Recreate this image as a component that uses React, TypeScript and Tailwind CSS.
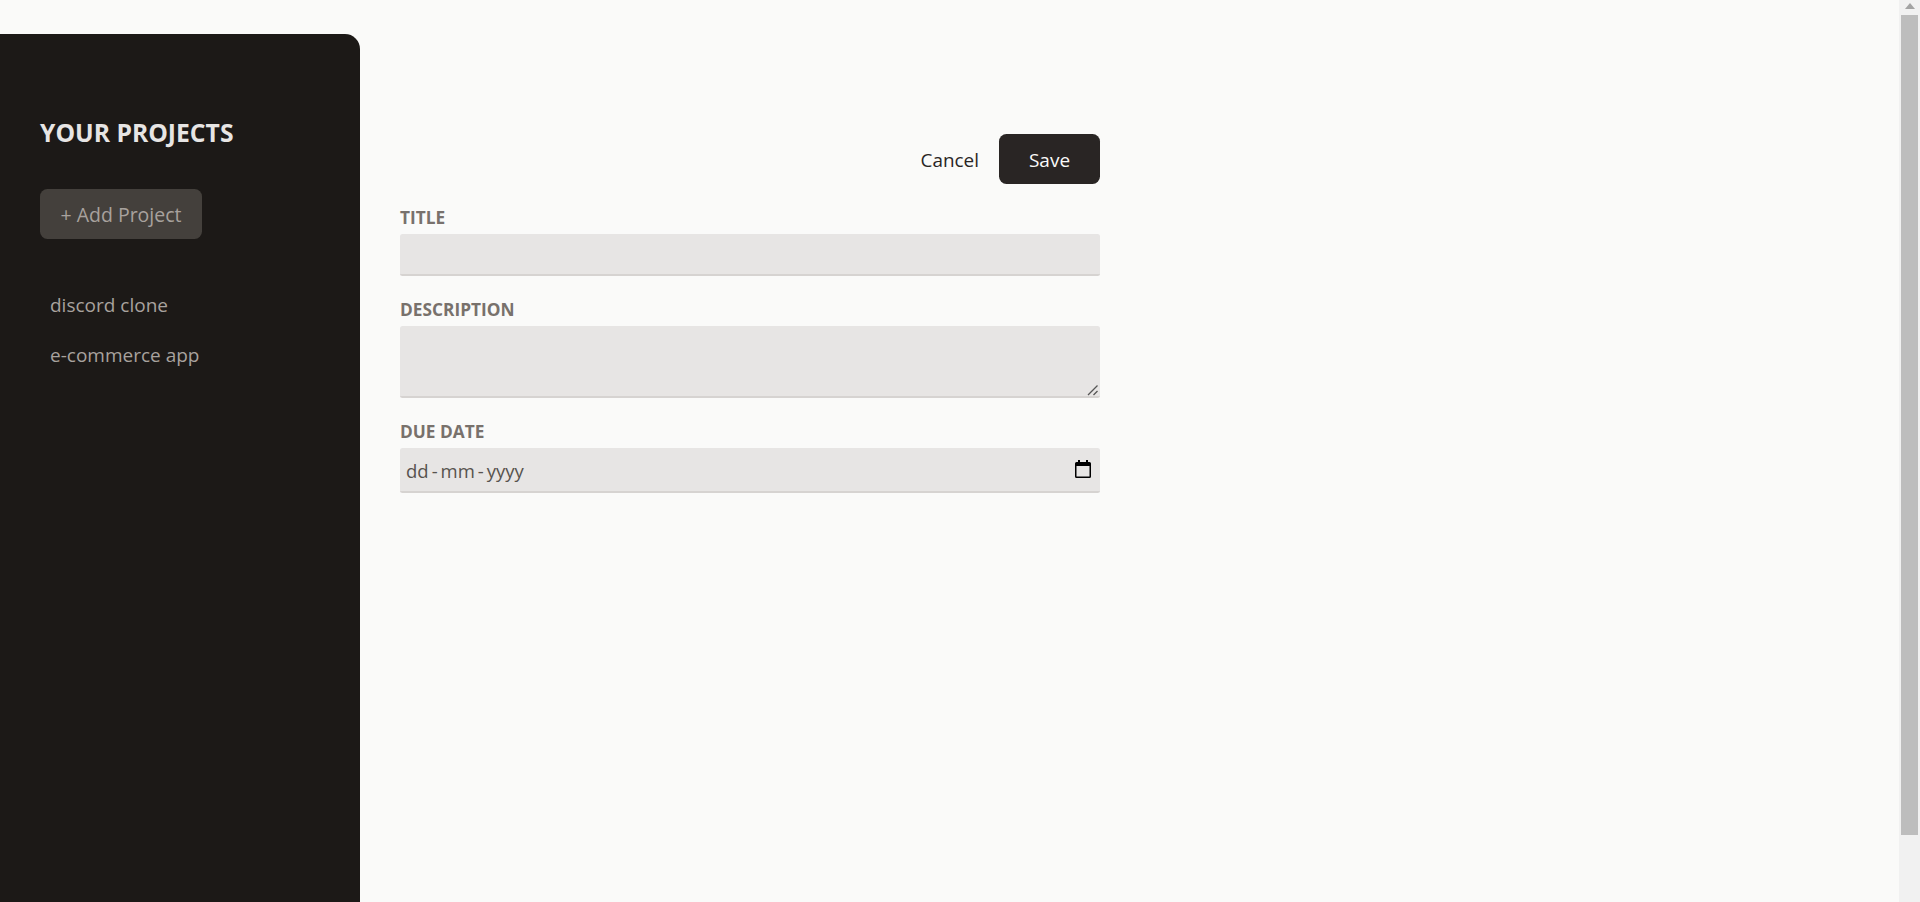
const labelClass = 'pt-[1px] h-[25px] text-[17.3px] leading-[25px] font-bold uppercase text-[#78716c]'
const fieldClass = 'w-full block rounded-[2.5px] border-b-[2.5px] border-[#d6d3d1] bg-[#e7e5e4] text-[#57534e] outline-none'
const projectClass = 'w-full text-left px-[10px] pt-[6px] pb-[4px] my-[5px] text-[19px] leading-[30px] text-[#a8a29e]'

export default function App() {
  return (
    <div className="flex h-[902px] overflow-hidden bg-[#fafaf9] font-['Open_Sans',sans-serif]">
      <div className="flex flex-1 gap-10 min-w-0">
        {/* Sidebar */}
        <aside className="w-[360px] mt-[34px] px-10 py-20 bg-[#1c1917] rounded-tr-[15px]">
          <h2 className="pt-[1px] h-[35px] mb-10 text-[24.7px] leading-[35px] font-bold uppercase text-[#e7e5e4]">Your Projects</h2>
          <button className="w-[162px] h-[50px] pt-[1px] text-[19.5px] leading-[30px] rounded-[7.5px] bg-[#44403c] text-[#a8a29e]">+ Add Project</button>
          <ul className="mt-10">
            <li>
              <button className={projectClass}>discord clone</button>
            </li>
            <li>
              <button className={projectClass}>e-commerce app</button>
            </li>
          </ul>
        </aside>

        {/* Form */}
        <main className="w-[700px] mt-[134px]">
          <menu className="flex items-center justify-end gap-[20px] mb-5">
            <button className="pt-[2px] text-[18.9px] leading-[30px] text-[#292524]">Cancel</button>
            <button className="w-[101px] h-[50px] pt-[1px] text-[19px] leading-[30px] rounded-[7.5px] bg-[#292524] text-[#fafaf9]">Save</button>
          </menu>
          <div className="flex flex-col gap-5">
            <div className="flex flex-col gap-[5px]">
              <label className={labelClass}>Title</label>
              <input type="text" className={`${fieldClass} h-[42px] px-[5px]`} />
            </div>
            <div className="flex flex-col gap-[5px]">
              <label className={labelClass}>Description</label>
              <div className="relative">
                <textarea className={`${fieldClass} h-[72px] px-[5px] resize-none`} />
                <svg width="12" height="12" viewBox="0 0 12 12" className="absolute right-[1px] bottom-[2px] text-[#555555]">
                  <path fill="none" stroke="currentColor" strokeWidth="1.3" d="M1 11 10.5 1.5M6.5 11l4-4" />
                </svg>
              </div>
            </div>
            <div className="flex flex-col gap-[5px]">
              <label className={labelClass}>Due Date</label>
              <div className={`${fieldClass} h-[45px] pl-[6px] pr-[9px] flex items-center justify-between`}>
                <span className="pt-[2px] text-[18.5px]">dd<span className="mx-[3px]">-</span>mm<span className="mx-[3px]">-</span>yyyy</span>
                <svg width="16" height="18" viewBox="0 0 16 18" className="text-black -mt-[2px]">
                  <path fill="currentColor" d="M3 0h2v2h6V0h2v2h1.5A1.5 1.5 0 0 1 16 3.5v13a1.5 1.5 0 0 1-1.5 1.5h-13A1.5 1.5 0 0 1 0 16.5v-13A1.5 1.5 0 0 1 1.5 2H3V0Zm-1.5 6v10.5h13V6h-13Z" />
                </svg>
              </div>
            </div>
          </div>
        </main>
      </div>

      {/* Window scrollbar */}
      <div className="w-[21px] shrink-0 flex flex-col items-center bg-[#f1f1f1]">
        <svg width="10" height="6" viewBox="0 0 10 6" className="mt-[3px] text-[#a3a3a3]">
          <path fill="currentColor" d="M5 0l5 6H0z" />
        </svg>
        <div className="mt-[6px] w-[17px] h-[820px] bg-[#bdbdbd]" />
      </div>
    </div>
  )
}
